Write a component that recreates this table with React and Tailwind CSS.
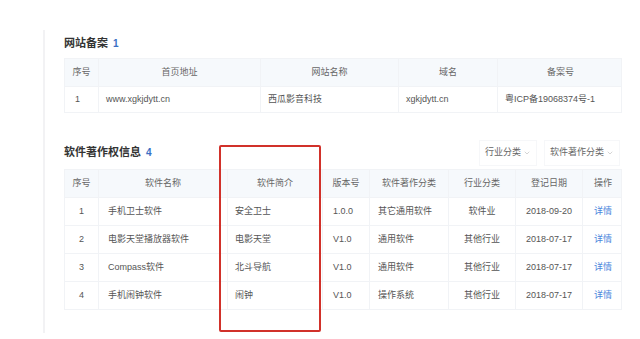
import React from 'react';
import { ChevronDown } from 'lucide-react';

const font = { fontFamily: '"Liberation Sans", "Noto Sans CJK SC", sans-serif' };

const siteCols = 'grid-cols-[34px_162px_138px_99px_125px]';
const softCols = 'grid-cols-[34px_129px_95px_47px_79px_67px_67px_40px]';

const softRows = [
  ['1', '手机卫士软件', '安全卫士', '1.0.0', '其它通用软件', '软件业', '2018-09-20'],
  ['2', '电影天堂播放器软件', '电影天堂', 'V1.0', '通用软件', '其他行业', '2018-07-17'],
  ['3', 'Compass软件', '北斗导航', 'V1.0', '通用软件', '其他行业', '2018-07-17'],
  ['4', '手机闹钟软件', '闹钟', 'V1.0', '操作系统', '其他行业', '2018-07-17'],
];

function Cell({ children, center, last, className = '' }) {
  return (
    <div
      className={`flex items-center overflow-hidden whitespace-nowrap ${center ? 'justify-center' : 'pl-[7px]'} ${last ? '' : 'border-r border-[#f1f3f6]'} ${className}`}
    >
      {children}
    </div>
  );
}

function Title({ name, count }) {
  return (
    <div className="flex items-center h-[16px]">
      <span className="text-[11px] font-bold text-[#333]">{name}</span>
      <span className="ml-[5px] text-[10px] font-bold text-[#3b6fc4]">{count}</span>
    </div>
  );
}

function Filter({ label }) {
  return (
    <div className="flex items-center h-[26px] px-[5px] border border-[#f6f7f9] text-[9px] text-[#666] gap-[2px]">
      {label}
      <ChevronDown size={8} strokeWidth={1.5} color="#aaa" />
    </div>
  );
}

export default function App() {
  return (
    <div className="relative w-[640px] h-[339px] bg-white overflow-hidden" style={font}>
      <div className="ml-[43px] mt-[30px] h-[303px] border-l-2 border-[#f2f2f4] pl-[19px] pr-[18px] pt-[5px]">
        <Title name="网站备案" count="1" />

        <div className="mt-[7px] border border-[#f1f3f6] text-[9px]">
          <div className={`grid ${siteCols} h-[28px] bg-[#f6f9fc] text-[#666] border-b border-[#f1f3f6]`}>
            <Cell center>序号</Cell>
            <Cell center>首页地址</Cell>
            <Cell center>网站名称</Cell>
            <Cell center>域名</Cell>
            <Cell center last>备案号</Cell>
          </div>
          <div className={`grid ${siteCols} h-[25px] text-[#555]`}>
            <Cell className="pl-[10px]">1</Cell>
            <Cell>www.xgkjdytt.cn</Cell>
            <Cell className="pl-[6px]">西瓜影音科技</Cell>
            <Cell className="pl-[5px]">xgkjdytt.cn</Cell>
            <Cell last>粤ICP备19068374号-1</Cell>
          </div>
        </div>

        <div className="mt-[25px] flex items-center justify-between h-[29px]">
          <Title name="软件著作权信息" count="4" />
          <div className="flex items-center gap-[7px] pr-[2px]">
            <Filter label="行业分类" />
            <Filter label="软件著作分类" />
          </div>
        </div>

        <div className="mt-[2px] border border-[#f1f3f6] text-[9px]">
          <div className={`grid ${softCols} h-[27px] bg-[#f6f9fc] text-[#666]`}>
            {['序号', '软件名称', '软件简介', '版本号', '软件著作分类', '行业分类', '登记日期', '操作'].map((h, i) => (
              <Cell key={h} center last={i === 7}>{h}</Cell>
            ))}
          </div>
          {softRows.map((r) => (
            <div key={r[0]} className={`grid ${softCols} h-[28px] text-[#555] border-t border-[#f1f3f6]`}>
              <Cell center>{r[0]}</Cell>
              <Cell className="pl-[9px]">{r[1]}</Cell>
              <Cell className="pl-[6px]">{r[2]}</Cell>
              <Cell className="pl-[10px]">{r[3]}</Cell>
              <Cell className="pl-[8px]">{r[4]}</Cell>
              <Cell center>{r[5]}</Cell>
              <Cell center>{r[6]}</Cell>
              <Cell center last className="text-[#4a86dc]">详情</Cell>
            </div>
          ))}
        </div>
      </div>

      <div className="absolute left-[219px] top-[145px] w-[102px] h-[187px] border-2 border-[#d1312a] rounded-[2px]" />
    </div>
  );
}
